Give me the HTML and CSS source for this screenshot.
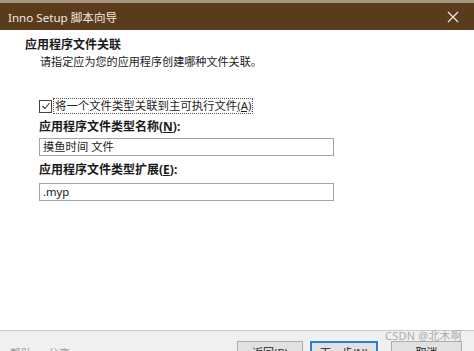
FILE: index.html
```html
<!DOCTYPE html>
<html lang="zh-CN">
<head>
<meta charset="UTF-8" />
<title>Inno Setup 脚本向导</title>
<link rel="stylesheet" href="styles.css">
</head>
<body>
  <div class="window">
    <div class="topline"></div>
    <div class="titlebar">
      <span class="title">Inno Setup 脚本向导</span>
      <svg class="close" width="12" height="12" viewBox="0 0 12 12">
        <path d="M1 1 L11 11 M11 1 L1 11" stroke="#efe6dc" stroke-width="1.3" fill="none" />
      </svg>
    </div>

    <div class="main">
      <div class="header">
        <div class="heading">应用程序文件关联</div>
        <div class="subtitle">请指定应为您的应用程序创建哪种文件关联。</div>
      </div>

      <div class="form">
        <label class="check-row">
          <span class="checkbox">
            <svg width="10" height="10" viewBox="0 0 10 10">
              <path d="M1.5 5 L4 7.5 L8.5 2" stroke="#333" stroke-width="1.1" fill="none" />
            </svg>
          </span>
          <span class="check-label">将一个文件类型关联到主可执行文件<u>(A)</u></span>
        </label>

        <div class="field-label">应用程序文件类型名称(<u>N</u>):</div>
        <div class="textbox">摸鱼时间 文件</div>

        <div class="field-label second">应用程序文件类型扩展(<u>E</u>):</div>
        <div class="textbox">.myp</div>
      </div>
    </div>

    <div class="footer">
      <div class="footer-links">
        <span>帮助</span>
        <span>分享</span>
      </div>
      <div class="buttons">
        <button class="btn back">返回(B)</button>
        <button class="btn next">下一步(N)</button>
        <button class="btn cancel">取消</button>
      </div>
      <div class="watermark">CSDN @北木啊</div>
    </div>
  </div>
</body>
</html>
```

FILE: styles.css
```css
body { margin: 0; background: #fff; font-family: "Noto Sans", "Noto Sans CJK SC", sans-serif; color: #1a1a1a; }
.window { width: 474px; height: 351px; display: flex; flex-direction: column; overflow: hidden; }

.topline { height: 3px; background: #a6957f; }
.titlebar { height: 27px; background: #5a3b1b; display: flex; align-items: center; justify-content: space-between; padding: 0 15px 0 8px; }
.title { color: #f1e9e0; font-size: 11.6px; }
.close { display: block; }

.main { flex: 1; background: #fff; }
.header { padding: 7px 0 0 25px; }
.heading { font-size: 12px; font-weight: bold; line-height: 16px; }
.subtitle { font-size: 11.1px; line-height: 14px; margin: 2px 0 0 15px; color: #222; }

.form { padding-left: 39px; margin-top: 29px; width: 295px; }
.check-row { display: flex; align-items: center; height: 16px; gap: 2px; }
.checkbox { width: 11px; height: 11px; border: 1px solid #444; display: flex; align-items: center; justify-content: center; background: #fff; }
.check-label { font-size: 11.4px; line-height: 14px; outline: 1px dotted #555; outline-offset: 0; padding: 0 1px; color: #222; }
.check-label u, .field-label u { text-decoration: underline; }

.field-label { font-size: 12px; font-weight: bold; line-height: 16px; margin-top: 5px; }
.field-label.second { margin-top: 6px; }
.textbox { height: 16px; border: 1px solid #a3a3a3; font-size: 11.3px; line-height: 16px; padding: 0 3px; margin-top: 3px; color: #222; }
.field-label.second + .textbox { margin-top: 5px; }

.footer { height: 20px; border-top: 1px solid #c9c9c9; background: #f0f0f0; position: relative; display: flex; justify-content: space-between; padding: 0 12px 0 10px; }
.footer-links { display: flex; gap: 16px; font-size: 11px; color: #9a9a9a; padding-top: 14px; }
.buttons { display: flex; padding-top: 10px; }
.btn { font-family: inherit; font-size: 11px; height: 22px; background: #e1e1e1; border: 1px solid #adadad; padding: 2px 0 0; color: #222; line-height: 14px; }
.back { width: 66px; margin-right: 7px; }
.next { width: 68px; border: 2px solid #2a7fd4; margin-right: 13px; }
.cancel { width: 71px; }
.watermark { position: absolute; right: 12px; top: -4px; font-size: 11px; color: #acacac; letter-spacing: 0.2px; }
```
